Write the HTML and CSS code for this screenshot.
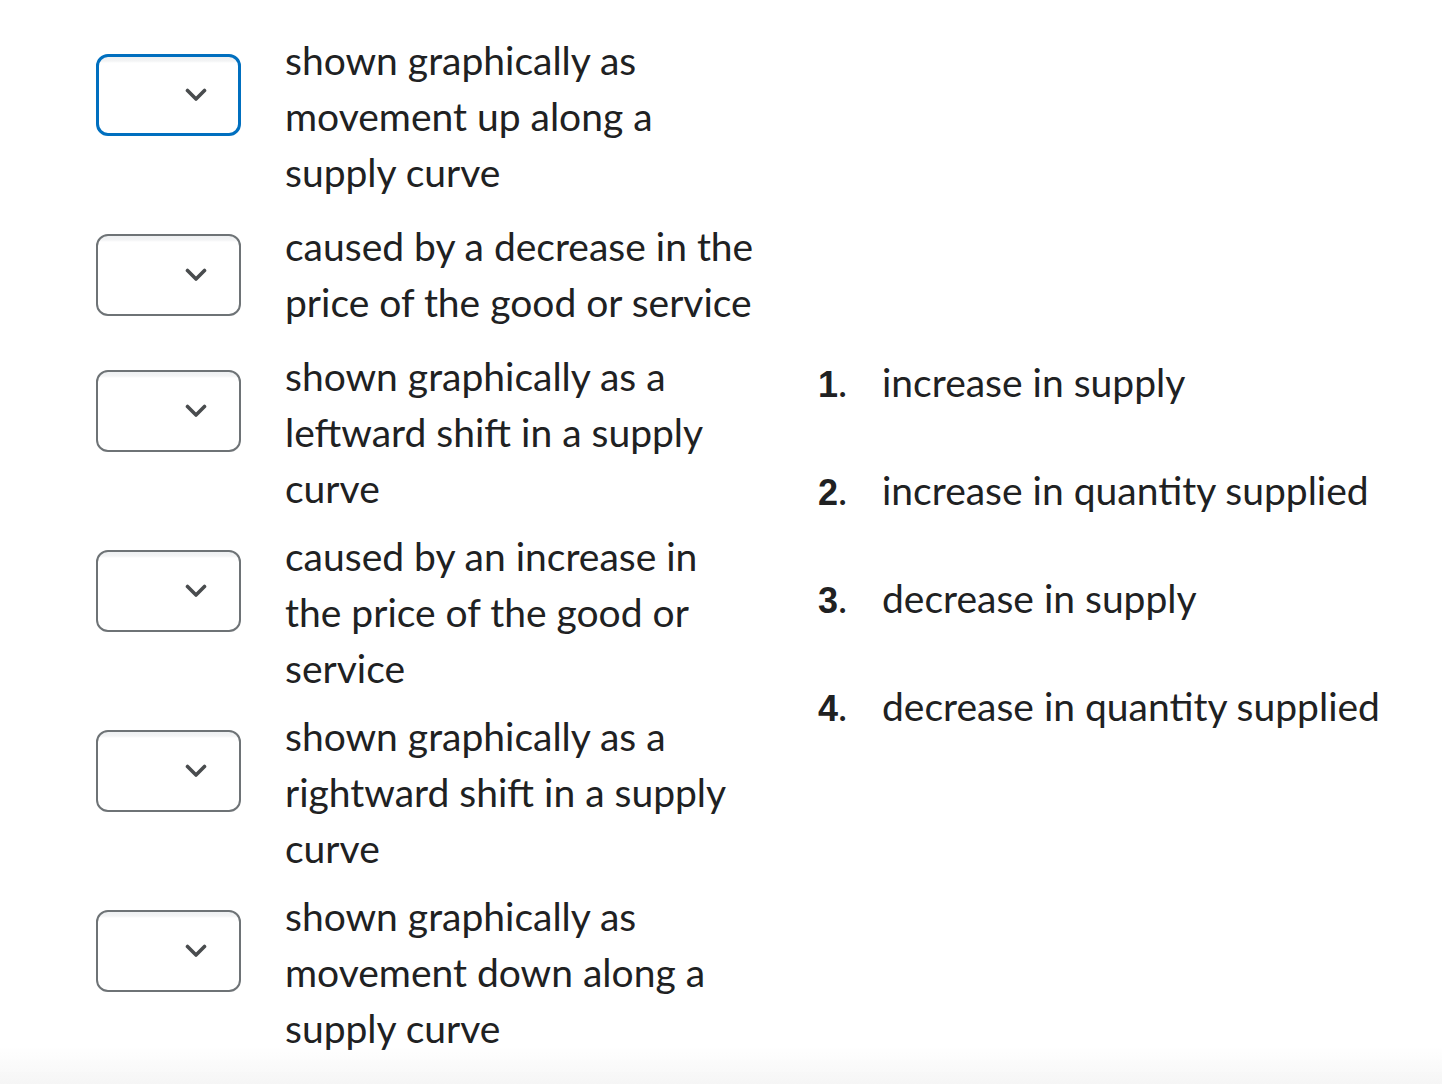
FILE: index.html
```html
<!DOCTYPE html>
<html>
<head>
<meta charset="utf-8">
<link rel="stylesheet" href="styles.css">
</head>
<body>
<div class="wrap">
  <div class="left">
    <div class="row">
      <div class="select focused"><svg class="chev" viewBox="0 0 22 14" width="22" height="14"><path d="M2.5 2.5 L11 11 L19.5 2.5" fill="none" stroke="#494c4e" stroke-width="3.6" stroke-linecap="round" stroke-linejoin="round"/></svg></div>
      <div class="text">shown graphically as movement up along a supply curve</div>
    </div>
    <div class="row">
      <div class="select"><svg class="chev" viewBox="0 0 22 14" width="22" height="14"><path d="M2.5 2.5 L11 11 L19.5 2.5" fill="none" stroke="#494c4e" stroke-width="3.6" stroke-linecap="round" stroke-linejoin="round"/></svg></div>
      <div class="text">caused by a decrease in the price of the good or service</div>
    </div>
    <div class="row">
      <div class="select"><svg class="chev" viewBox="0 0 22 14" width="22" height="14"><path d="M2.5 2.5 L11 11 L19.5 2.5" fill="none" stroke="#494c4e" stroke-width="3.6" stroke-linecap="round" stroke-linejoin="round"/></svg></div>
      <div class="text">shown graphically as a leftward shift in a supply curve</div>
    </div>
    <div class="row">
      <div class="select"><svg class="chev" viewBox="0 0 22 14" width="22" height="14"><path d="M2.5 2.5 L11 11 L19.5 2.5" fill="none" stroke="#494c4e" stroke-width="3.6" stroke-linecap="round" stroke-linejoin="round"/></svg></div>
      <div class="text">caused by an increase in the price of the good or service</div>
    </div>
    <div class="row">
      <div class="select"><svg class="chev" viewBox="0 0 22 14" width="22" height="14"><path d="M2.5 2.5 L11 11 L19.5 2.5" fill="none" stroke="#494c4e" stroke-width="3.6" stroke-linecap="round" stroke-linejoin="round"/></svg></div>
      <div class="text">shown graphically as a rightward shift in a supply curve</div>
    </div>
    <div class="row">
      <div class="select"><svg class="chev" viewBox="0 0 22 14" width="22" height="14"><path d="M2.5 2.5 L11 11 L19.5 2.5" fill="none" stroke="#494c4e" stroke-width="3.6" stroke-linecap="round" stroke-linejoin="round"/></svg></div>
      <div class="text">shown graphically as movement down along a supply curve</div>
    </div>
  </div>
  <ol class="right">
    <li><span class="num"><b>1</b>.</span><span>increase in supply</span></li>
    <li><span class="num"><b>2</b>.</span><span>increase in quantity supplied</span></li>
    <li><span class="num"><b>3</b>.</span><span>decrease in supply</span></li>
    <li><span class="num"><b>4</b>.</span><span>decrease in quantity supplied</span></li>
  </ol>
</div>
<div class="fade"></div>
</body>
</html>
```
FILE: styles.css
```css
html, body {
  margin: 0;
  padding: 0;
  background: #fff;
}
body {
  font-family: Lato, "Noto Sans", sans-serif;
  font-size: 39px;
  line-height: 56px;
  color: #202122;
}
.wrap {
  display: flex;
  align-items: center;
  padding: 32px 0 0 96px;
}
.left {
  display: flex;
  flex-direction: column;
  gap: 12px;
}
.row {
  display: flex;
  gap: 44px;
}
.select {
  box-sizing: border-box;
  width: 145px;
  height: 82px;
  margin: 22px 0 20px;
  align-self: flex-start;
  flex: none;
  border: 2px solid #6e7376;
  border-radius: 12px;
  background: linear-gradient(#eef0f2, #f3f4f5 4px, #fff 6px);
  display: flex;
  align-items: center;
  justify-content: flex-end;
  padding-right: 32px;
}
.select.focused {
  border: 3px solid #006fbf;
  padding-right: 31px;
}
.chev {
  display: block;
}
.text {
  width: 470px;
  align-self: center;
}
.right {
  list-style: none;
  margin: 0 0 0 63px;
  padding: 0;
  display: flex;
  flex-direction: column;
  gap: 52px;
}
.right li {
  display: flex;
}
.num {
  width: 64px;
  flex: none;
}
.num b {
  font-family: "Liberation Sans", Arial, sans-serif;
  font-weight: 700;
  font-size: 36px;
  line-height: 1;
}
.fade {
  position: fixed;
  left: 0;
  right: 0;
  bottom: 0;
  height: 36px;
  background: linear-gradient(rgba(245,245,245,0), #f5f5f5);
  pointer-events: none;
}
```
